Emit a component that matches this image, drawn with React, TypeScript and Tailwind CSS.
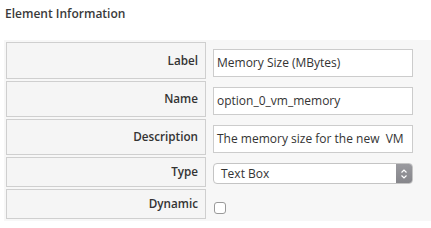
import React from "react";

const rows = [
  { label: "Label", h: "h-[37px]", kind: "text", value: "Memory Size (MBytes)" },
  { label: "Name", h: "h-[36px]", kind: "text", value: "option_0_vm_memory" },
  { label: "Description", h: "h-[36px]", kind: "text", value: "The memory size for the new  VM" },
  { label: "Type", h: "h-[30px]", kind: "select", value: "Text Box" },
  { label: "Dynamic", h: "h-[30px]", kind: "check", value: "" },
];

export default function App() {
  return (
    <div
      className="w-[431px] h-[228px] bg-white text-[#333]"
      style={{ fontFamily: '"Open Sans", "Liberation Sans", sans-serif' }}
    >
      <div className="pl-[5px] pt-[5px] h-[40px] text-[12px] font-semibold leading-[17px] text-[#3a3a3a]">
        Element Information
      </div>
      <div className="ml-[4px] w-[427px] bg-[#f7f7f7] p-[2px] grid grid-cols-[200px_1fr] gap-[2px]">
        {rows.map((r) => (
          <React.Fragment key={r.label}>
            <div
              className={`${r.h} border border-[#cfcfcf] bg-[#f5f5f5] flex items-center justify-end pr-[7px] text-[11.7px] font-semibold text-[#333]`}
            >
              {r.label}
            </div>
            <div className={`${r.h} pl-[5px] flex`}>
              {r.kind === "text" && (
                <div className="mt-auto mb-[2px] w-[200px] h-[28px] border border-[#cccccc] bg-white px-[3px] flex items-center text-[12px] text-[#333] whitespace-pre overflow-hidden">
                  {r.value}
                </div>
              )}
              {r.kind === "select" && (
                <div className="mt-[6px] w-[200px] h-[21px] border border-[#c4c4c4] rounded-[4px] bg-white flex items-center overflow-hidden">
                  <span className="pl-[7px] text-[12px] text-[#333] flex-1">{r.value}</span>
                  <span className="w-[16px] h-full bg-gradient-to-b from-[#9a9a9f] to-[#86868b] flex items-center justify-center">
                    <svg width="8" height="12" viewBox="0 0 8 12" fill="none">
                      <path d="M1.5 4.5 L4 2 L6.5 4.5" stroke="white" strokeWidth="1.2" />
                      <path d="M1.5 7.5 L4 10 L6.5 7.5" stroke="white" strokeWidth="1.2" />
                    </svg>
                  </span>
                </div>
              )}
              {r.kind === "check" && (
                <div className="mt-[13px] ml-[1px] w-[12px] h-[12px] border border-[#9a9a9a] rounded-[3px] bg-white" />
              )}
            </div>
          </React.Fragment>
        ))}
      </div>
    </div>
  );
}
